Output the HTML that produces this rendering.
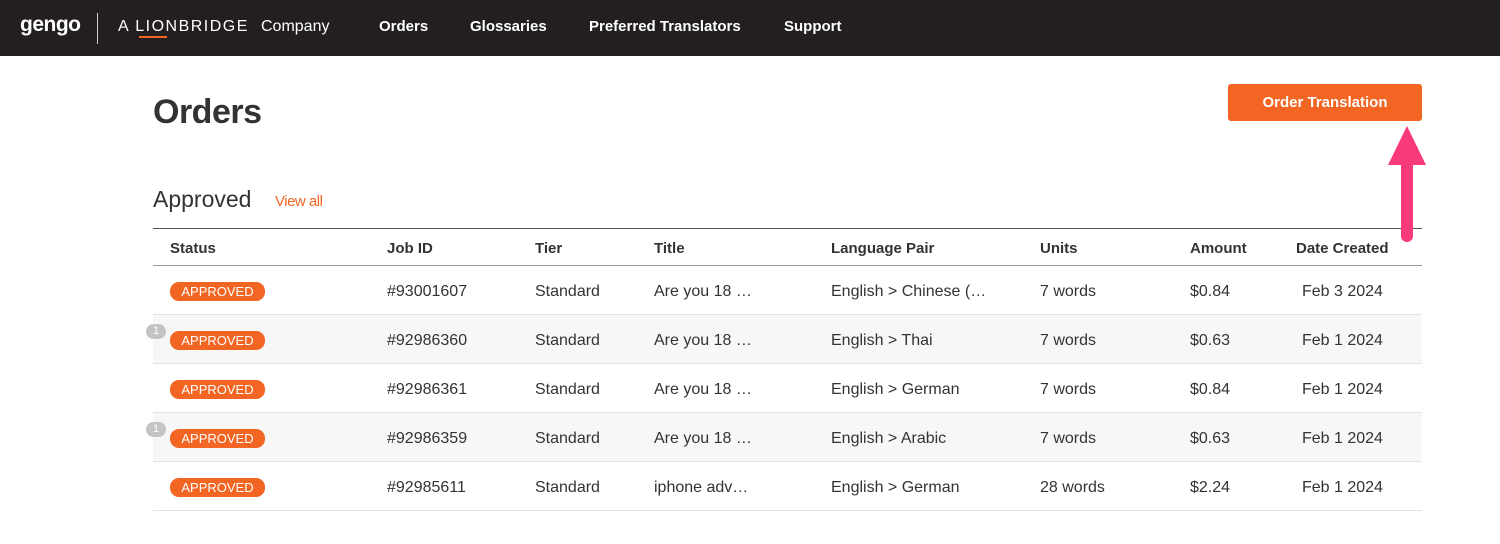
<!DOCTYPE html>
<html><head><style>
body{margin:0;width:1500px;height:544px;background:#fff;font-family:"Liberation Sans",Arial,sans-serif;color:#333;position:relative;overflow:hidden}
.nav{position:absolute;left:0;top:0;width:1500px;height:56px;background:#231f20;color:#fff}
.nav span{position:absolute;top:18px;font-size:16px}
h1{position:absolute;left:153px;top:93px;margin:0;font-size:34px;font-weight:bold;color:#333;letter-spacing:-0.5px}
.btn{position:absolute;left:1228px;top:84px;width:194px;height:37px;background:#f26522;border-radius:3px;color:#fff;font-weight:bold;font-size:15px;text-align:center;line-height:37px}
.h2{position:absolute;left:153px;top:186px;font-size:23px;color:#333}
.va{position:absolute;left:275px;top:193px;font-size:15px;color:#f26522;letter-spacing:-0.5px}
table{position:absolute;left:153px;top:228px;width:1269px;border-collapse:collapse;font-size:16px}
th{text-align:left;font-weight:bold;height:34px;border-top:1px solid #555;border-bottom:1px solid #999;padding:2px 0 0 0;font-size:15px}
td{height:45px;border-bottom:1px solid #e3e3e3;padding:3px 0 0 0;color:#333}
tr.g td{background:#f7f7f7}
.b{display:inline-block;background:#f26522;color:#fff;font-size:13px;border-radius:9px;width:95px;height:19px;line-height:19px;text-align:center;margin-left:17px;position:relative}
.c{position:absolute;left:-24px;top:-7px;width:20px;height:15px;background:#c4c4c4;border-radius:8px;color:#fff;font-size:11px;line-height:15px;text-align:center}
</style></head><body>
<div class="nav">
<span style="left:20px;top:13px;font-size:21px;font-weight:bold;letter-spacing:-0.5px">gengo</span>
<div style="position:absolute;left:97px;top:13px;width:1px;height:31px;background:#ccc"></div>
<span style="left:118px;font-size:16px;letter-spacing:1.5px">A LIONBRIDGE</span>
<div style="position:absolute;left:139px;top:36px;width:28px;height:2px;background:#f26522"></div>
<span style="left:261px">Company</span>
<span style="left:379px;font-weight:bold;font-size:15px">Orders</span>
<span style="left:470px;font-weight:bold;font-size:15px">Glossaries</span>
<span style="left:589px;font-weight:bold;font-size:15px">Preferred Translators</span>
<span style="left:784px;font-weight:bold;font-size:15px">Support</span>
</div>
<h1>Orders</h1>
<div class="btn">Order Translation</div>
<div class="h2">Approved</div>
<div class="va">View all</div>
<table>
<colgroup><col style="width:234px"><col style="width:148px"><col style="width:119px"><col style="width:177px"><col style="width:209px"><col style="width:150px"><col style="width:106px"><col></colgroup>
<tr><th style="padding-left:17px">Status</th><th>Job ID</th><th>Tier</th><th>Title</th><th>Language Pair</th><th>Units</th><th>Amount</th><th>Date Created</th></tr>
<tr><td><span class="b">APPROVED</span></td><td>#93001607</td><td>Standard</td><td>Are you 18 …</td><td>English &gt; Chinese (…</td><td>7 words</td><td>$0.84</td><td style="padding-left:6px">Feb 3 2024</td></tr>
<tr class="g"><td><span class="b"><span class="c">1</span>APPROVED</span></td><td>#92986360</td><td>Standard</td><td>Are you 18 …</td><td>English &gt; Thai</td><td>7 words</td><td>$0.63</td><td style="padding-left:6px">Feb 1 2024</td></tr>
<tr><td><span class="b">APPROVED</span></td><td>#92986361</td><td>Standard</td><td>Are you 18 …</td><td>English &gt; German</td><td>7 words</td><td>$0.84</td><td style="padding-left:6px">Feb 1 2024</td></tr>
<tr class="g"><td><span class="b"><span class="c">1</span>APPROVED</span></td><td>#92986359</td><td>Standard</td><td>Are you 18 …</td><td>English &gt; Arabic</td><td>7 words</td><td>$0.63</td><td style="padding-left:6px">Feb 1 2024</td></tr>
<tr><td><span class="b">APPROVED</span></td><td>#92985611</td><td>Standard</td><td>iphone adv…</td><td>English &gt; German</td><td>28 words</td><td>$2.24</td><td style="padding-left:6px">Feb 1 2024</td></tr>
</table>
<svg style="position:absolute;left:0;top:0" width="1500" height="544"><polygon points="1407,126 1388,165 1426,165" fill="#f8397a"/><line x1="1407" y1="160" x2="1407" y2="236" stroke="#f8397a" stroke-width="12" stroke-linecap="round"/></svg>
</body></html>
